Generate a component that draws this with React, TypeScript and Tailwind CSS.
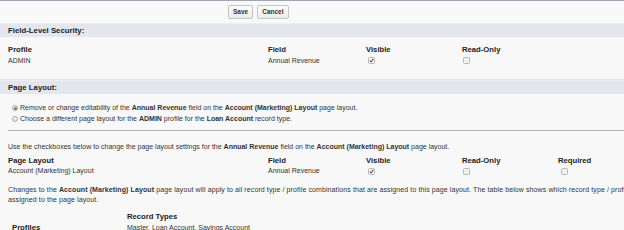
import React from 'react';

// Small checkbox as rendered in the classic setup pages
function Box({ checked }: { checked?: boolean }) {
  return (
    <span className="inline-flex h-[7px] w-[7px] items-center justify-center rounded-[1.5px] border border-[#b9b9b9] bg-[#f1f1f1]">
      {checked && (
        <svg width="5" height="5" viewBox="0 0 10 10" aria-hidden="true">
          <path d="M1.5 5.5 L4 8 L8.5 1.5" stroke="#333" strokeWidth="2" fill="none" />
        </svg>
      )}
    </span>
  );
}

function Radio({ checked }: { checked?: boolean }) {
  return (
    <span className="mr-[2px] inline-flex h-[6px] w-[6px] shrink-0 items-center justify-center rounded-full border border-[#a9a9a9] bg-[#efefef]">
      {checked && <span className="h-[3px] w-[3px] rounded-full bg-[#7a7a7a]" />}
    </span>
  );
}

function SectionHeader({ title }: { title: string }) {
  return (
    <div className="flex h-[14px] items-center border-t border-[#eceef4] bg-[#e4e6ee] px-[8px] text-[7.8px] font-bold text-[#222]">
      {title}
    </div>
  );
}

function Btn({ label }: { label: string }) {
  return (
    <button
      type="button"
      className="h-[14px] rounded-[2px] border border-[#c4c4c4] bg-gradient-to-b from-[#fdfdfd] to-[#ececec] px-[4px] text-[6.5px] font-bold leading-none text-[#333]"
    >
      {label}
    </button>
  );
}

const head = 'text-[7.7px] font-bold text-[#222]';

export default function App() {
  return (
    <div
      className="h-[230px] w-[624px] overflow-hidden border-t border-[#9ea3b6] bg-[#f8f8f8] text-[7px] text-[#333]"
      style={{ fontFamily: '"Liberation Sans", Arial, sans-serif' }}
    >
      {/* buttons */}
      <div className="flex h-[22px] gap-[4px] bg-[#f9f9f9] pl-[228px] pt-[4px]">
        <Btn label="Save" />
        <Btn label="Cancel" />
      </div>

      <SectionHeader title="Field-Level Security:" />

      {/* field level security */}
      <div className="grid h-[42px] grid-cols-[260px_98px_96px_1fr] content-start pl-[8px] pt-[8px] leading-[10.5px]">
        <div className={head}>Profile</div>
        <div className={head}>Field</div>
        <div className={head}>Visible</div>
        <div className={head}>Read-Only</div>
        <div>ADMIN</div>
        <div>Annual Revenue</div>
        <div className="flex items-center pl-[2px]">
          <Box checked />
        </div>
        <div className="flex items-center pl-[1px]">
          <Box />
        </div>
      </div>

      <div className="border-t border-[#e6e6ea]" />
      <SectionHeader title="Page Layout:" />

      {/* radio choices */}
      <div className="flex flex-col pl-[12px] pt-[9px] leading-[10.5px]">
        <div className="flex items-center">
          <Radio checked />
          <span>
            Remove or change editability of the <b>Annual Revenue</b> field on the{' '}
            <b>Account (Marketing) Layout</b> page layout.
          </span>
        </div>
        <div className="flex items-center">
          <Radio />
          <span>
            Choose a different page layout for the <b>ADMIN</b> profile for the <b>Loan Account</b> record type.
          </span>
        </div>
      </div>

      <div className="ml-[8px] mt-[6px] border-t border-[#b5b5b5]" />

      <div className="pl-[8px] pt-[11px] leading-[10px]">
        Use the checkboxes below to change the page layout settings for the <b>Annual Revenue</b> field on the{' '}
        <b>Account (Marketing) Layout</b> page layout.
      </div>

      {/* page layout table */}
      <div className="grid grid-cols-[260px_98px_96px_96px_1fr] pl-[8px] pt-[4px] leading-[10px]">
        <div className={head}>Page Layout</div>
        <div className={head}>Field</div>
        <div className={head}>Visible</div>
        <div className={head}>Read-Only</div>
        <div className={head}>Required</div>
        <div>Account (Marketing) Layout</div>
        <div>Annual Revenue</div>
        <div className="flex items-center pl-[2px]">
          <Box checked />
        </div>
        <div className="flex items-center pl-[1px]">
          <Box />
        </div>
        <div className="flex items-center pl-[3px]">
          <Box />
        </div>
      </div>

      <div className="whitespace-nowrap pl-[8px] pt-[9px] leading-[10px] tracking-[0.1px]">
        Changes to the <b>Account (Marketing) Layout</b> page layout will apply to all record type / profile
        combinations that are assigned to this page layout. The table below shows which record type / profile
        combinations are
        <br />
        assigned to the page layout.
      </div>

      {/* record types */}
      <div className="grid grid-cols-[117px_1fr] pl-[10px] pt-[7px] leading-[10.5px]">
        <div />
        <div className={head}>Record Types</div>
        <div className={`pl-[2px] ${head}`}>Profiles</div>
        <div>Master, Loan Account, Savings Account</div>
      </div>
    </div>
  );
}
